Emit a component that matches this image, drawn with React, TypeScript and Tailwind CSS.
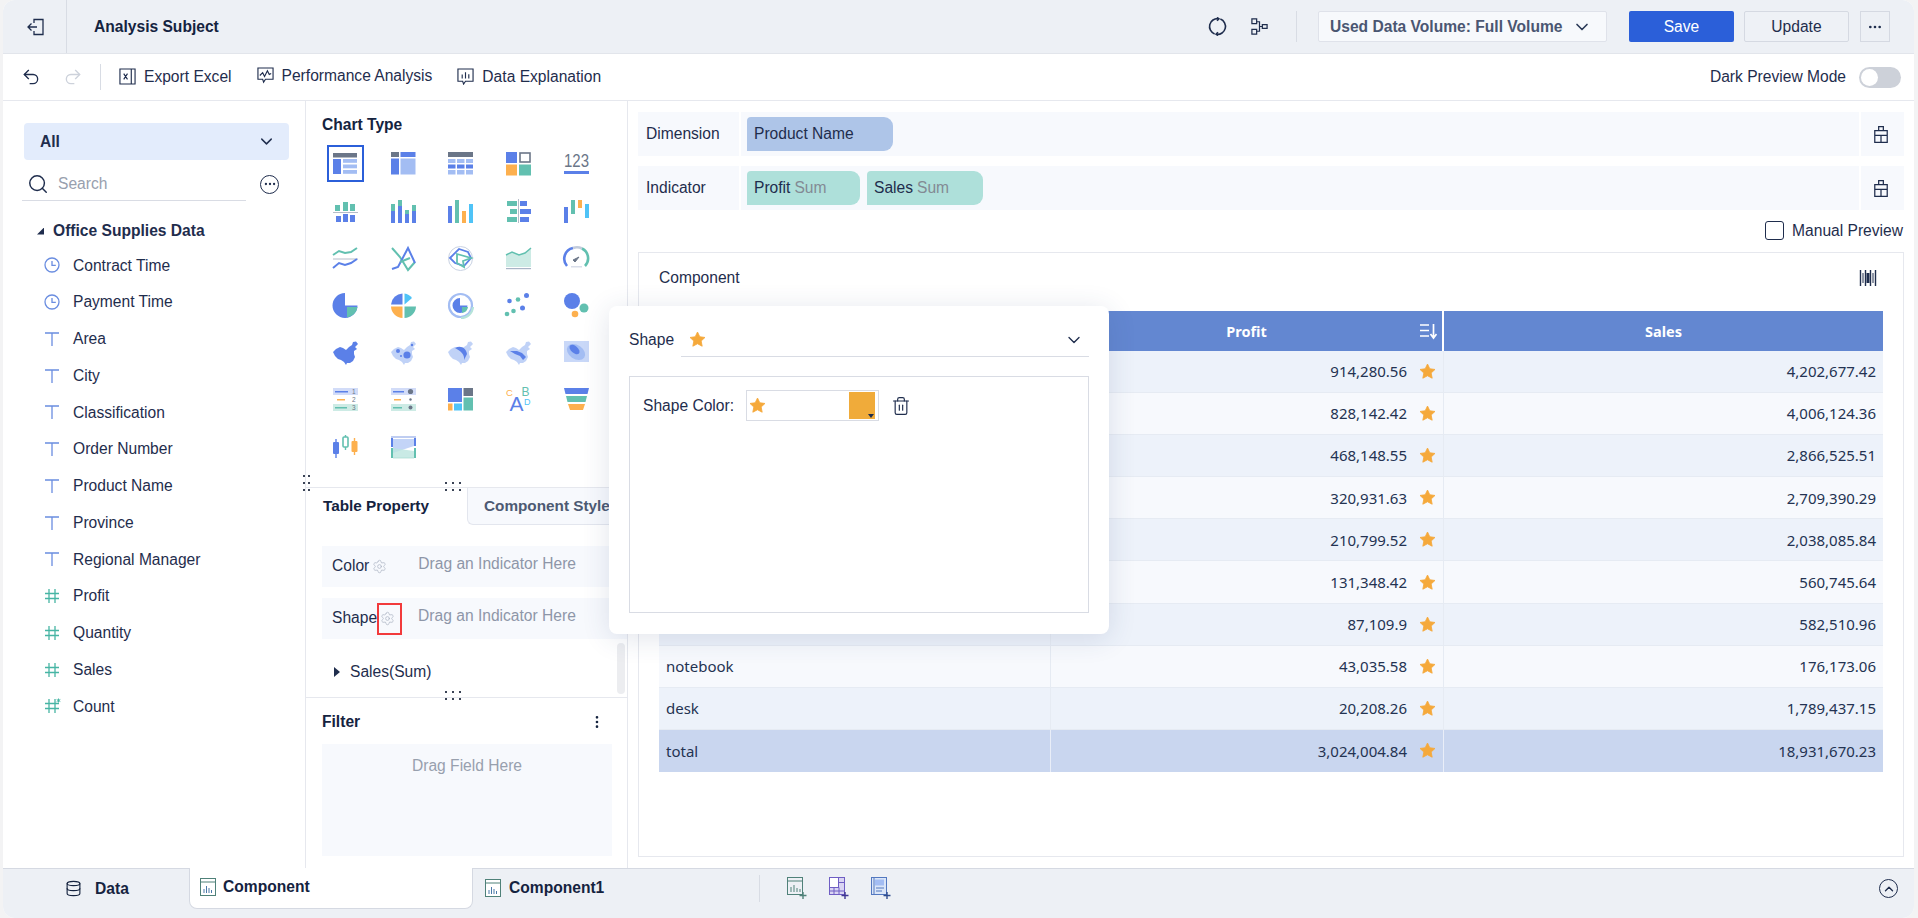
import { ChevronDown, Ellipsis, Search, Settings, Trash2, Undo2, Redo2, Database, EllipsisVertical, ChevronUp } from "lucide-react";

const B = "#5b80e8";
const L = "#a3bdf3";
const G = "#6b7688";
const T = "#62c0b0";
const O = "#fdb04e";
const C = "#4fc3f7";

type Box = [number, number, number, number, string];

const Bars = ({ items }: { items: Box[] }) => (
  <>
    {items.map(([x, y, w, h, c], i) => (
      <rect key={i} x={x} y={y} width={w} height={h} fill={c} />
    ))}
  </>
);

const Star = ({ className = "w-[17px] h-[17px]" }: { className?: string }) => (
  <svg viewBox="0 0 20 20" className={className}>
    <path
      d="M10 1.2l2.7 5.6 6.1.8-4.5 4.2 1.2 6.1L10 15l-5.5 2.9 1.2-6.1L1.2 7.6l6.1-.8z"
      fill="#f5a93b"
      stroke="#f5a93b"
      strokeWidth="1"
      strokeLinejoin="round"
    />
  </svg>
);

const chinaPath = "M0 12L3 9 7 7 10 8 13 10 16 7 19 5 20 2 23 1.500 25 4 22 7 24 9 21 11 21 14 22 17 20 21 17 23 14 23 13 25 11 22 8 20 5 19 2 16z";

const chartIcons: React.ReactNode[] = [
  <Bars items={[[0, 2, 24, 4.5, G], [0, 8, 8, 15, B], [10, 8, 14, 3.8, L], [10, 13.5, 14, 3.8, L], [10, 19, 14, 3.8, L]]} />,
  <Bars items={[[0, 1, 8, 5, G], [9.5, 1, 15, 5, B], [0, 7.5, 8, 16, B], [9.5, 7.5, 15, 16, L]]} />,
  <>
    <Bars items={[[0, 1, 25, 5, G]]} />
    <Bars items={[[0, 8, 7.5, 4, L], [9, 8, 7.5, 4, L], [18, 8, 7, 4, L], [0, 13.5, 7.5, 4, B], [9, 13.5, 7.5, 4, B], [18, 13.5, 7, 4, B], [0, 19, 7.5, 4.5, L], [9, 19, 7.5, 4.5, L], [18, 19, 7, 4.5, L]]} />
  </>,
  <>
    <Bars items={[[0, 1, 11, 11, B], [0, 13.5, 11, 11, O], [13, 13.5, 12, 11, T]]} />
    <rect x="14" y="2" width="10" height="9" fill="none" stroke={G} strokeWidth="1.6" />
  </>,
  <>
    <text x="12.5" y="16" textAnchor="middle" fontSize="18" textLength="25" lengthAdjust="spacingAndGlyphs" fill={G} fontFamily="Liberation Sans, sans-serif">123</text>
    <Bars items={[[0, 20, 25, 3, B]]} />
  </>,
  <Bars items={[[2, 6, 5, 6, T], [10, 3, 5, 9, T], [17, 5, 5, 7, T], [0, 13, 25, 1, "#b5bcc9"], [3, 17, 5, 6, B], [10, 15, 5, 8, B], [17, 16, 5, 7, B]]} />,
  <Bars items={[[0, 5, 4, 7, T], [0, 12, 4, 12, B], [7, 1, 4, 6, T], [7, 7, 4, 17, B], [14, 11, 4, 4, T], [14, 15, 4, 9, B], [21, 6, 4, 6, T], [21, 12, 4, 12, B]]} />,
  <Bars items={[[0, 7, 4, 17, B], [7, 1, 4, 23, T], [14, 12, 4, 12, O], [21, 5, 4, 19, C]]} />,
  <Bars items={[[1, 2, 10, 5, T], [4, 10, 7, 5, T], [1, 18, 10, 5, T], [12, 0, 1, 24, "#b5bcc9"], [14, 2, 7, 5, B], [14, 10, 11, 5, B], [14, 18, 9, 5, B]]} />,
  <Bars items={[[0, 8, 4, 16, B], [7, 1, 4, 14, T], [14, 1, 4, 8, O], [21, 5, 4, 14, C]]} />,
  <g fill="none" strokeWidth="2">
    <path d="M0 9l6-4 6 2 6-1 6-4" stroke={T} />
    <path d="M0 13h25" stroke="#b5bcc9" strokeWidth="1" />
    <path d="M0 22l6-5 6 2 6-2 6-4" stroke={B} />
  </g>,
  <g fill="none" strokeWidth="2">
    <path d="M1 2l8 9 8 13 7-8" stroke={T} />
    <path d="M1 23l6-2 10-19 7 15" stroke={B} />
    <path d="M9 16l10-4" stroke={T} />
  </g>,
  <g fill="none">
    <circle cx="12.5" cy="12.5" r="12" stroke="#c9d2e3" strokeWidth="1" />
    <path d="M2 12L11 3l9 3 3 6-7 8-9-3z" stroke={B} strokeWidth="1.8" />
    <path d="M9 8l14 4-8 3 1 6-7-4z" stroke={T} strokeWidth="1.8" />
  </g>,
  <>
    <path d="M0 9l6-3 7 3 6-2 6-5v19H0z" fill="#cdebe5" />
    <path d="M0 9l6-3 7 3 6-2 6-5" fill="none" stroke={T} strokeWidth="1.5" />
    <rect x="0" y="22" width="25" height="1.2" fill="#a9b4c6" />
  </>,
  <g fill="none" strokeWidth="2.6">
    <path d="M3 20A11 11 0 0 1 9 2" stroke={B} />
    <path d="M9 2A11 11 0 0 1 18 2.5" stroke="#c2cbdb" />
    <path d="M18 2.5A11 11 0 0 1 21 20" stroke={T} />
    <path d="M9 14l6-3-4 5z" fill={G} stroke={G} strokeWidth="1" />
    <rect x="7" y="20" width="11" height="1.5" fill="#d9deea" stroke="none" />
  </g>,
  <>
    <path d="M12 0a12.5 12.5 0 1 0 12.5 12.5H12z" fill={B} />
    <path d="M14 14h10.500A12 12 0 0 1 14 24.500z" fill={T} />
  </>,
  <>
    <path d="M11.500 0.500A12 12 0 0 0 0 11.500h11.500z" fill={B} />
    <path d="M13.500 0.500A12 12 0 0 1 21 5l-7.500 6.500z" fill={C} />
    <path d="M0 13.500h11.500V25A12 12 0 0 1 0 13.500z" fill={O} />
    <path d="M13.500 13.500H25A12 12 0 0 1 13.500 25z" fill={T} />
  </>,
  <>
    <circle cx="12.5" cy="12.5" r="11.5" fill="none" stroke={L} strokeWidth="2.2" />
    <path d="M12 5a7.500 7.500 0 1 0 7.500 7.500H12z" fill={B} />
    <path d="M14 14h6a7 7 0 0 1-6 6z" fill={T} />
    <path d="M13 25a12 12 0 0 0 12-11" fill="none" stroke="#b5e3da" strokeWidth="2.2" />
  </>,
  <g>
    <circle cx="20.5" cy="2.5" r="2.5" fill={B} />
    <circle cx="12" cy="6.5" r="2.3" fill={T} />
    <circle cx="3.5" cy="8" r="2.3" fill={B} />
    <circle cx="16.5" cy="15" r="2.5" fill={B} />
    <circle cx="7.5" cy="18" r="2.3" fill={T} />
    <circle cx="1" cy="21" r="2.3" fill={T} />
  </g>,
  <>
    <circle cx="8" cy="8" r="8" fill={B} />
    <circle cx="20" cy="15" r="4.5" fill={T} />
    <circle cx="11" cy="21" r="3.3" fill={O} />
  </>,
  <path d={chinaPath} fill={B} />,
  <>
    <path d={chinaPath} fill="#c0d2f7" />
    <circle cx="16" cy="15" r="3.6" fill={B} />
    <circle cx="7" cy="11" r="2" fill={B} />
    <circle cx="21" cy="5" r="1.2" fill={B} />
    <circle cx="10" cy="16" r="1" fill={B} />
  </>,
  <>
    <path d={chinaPath} fill="#c0d2f7" />
    <path d="M7 8c6-3 11 0 12 6l-3 6c1-5-3-9-9-12z" fill={B} />
  </>,
  <>
    <path d={chinaPath} fill="#c0d2f7" />
    <path d="M4 11l5 3 5 2 3 4 3-3-4-4-5-2z" fill={B} />
  </>,
  <>
    <rect width="25" height="21" y="1" fill="#c9d8f8" />
    <ellipse cx="12" cy="12" rx="10" ry="7" transform="rotate(35 12 12)" fill="#a3bdf3" />
    <ellipse cx="10.5" cy="9.5" rx="6" ry="3.5" transform="rotate(42 10.5 9.5)" fill={B} />
  </>,
  <>
    <Bars items={[[0, 1, 25, 7, "#d2dcf8"], [2, 4, 13, 1.5, B], [4, 12, 8, 1.5, O], [0, 17, 25, 7, "#cdebe5"], [2, 20, 12, 1.5, T]]} />
    <g fontSize="6.5" fill={G} fontFamily="Liberation Sans, sans-serif">
      <text x="19" y="7">1</text>
      <text x="19" y="15">2</text>
      <text x="19" y="23">3</text>
    </g>
  </>,
  <>
    <Bars items={[[0, 1, 25, 7, "#d2dcf8"], [2, 4, 11, 1.5, B], [3, 12, 7, 1.5, O], [0, 17, 25, 7, "#cdebe5"], [2, 20, 9, 1.5, T]]} />
    <circle cx="19.5" cy="4.5" r="2.6" fill={G} />
    <circle cx="19.5" cy="12.5" r="1.2" fill={G} />
    <circle cx="19.5" cy="20.5" r="2" fill={G} />
  </>,
  <Bars items={[[0, 1, 14, 14, B], [15.5, 1, 9.5, 8, G], [0, 16.5, 4.5, 7, O], [6, 16.5, 8, 7, C], [15.5, 10.5, 9.5, 13, T]]} />,
  <g fontFamily="Liberation Sans, sans-serif">
    <text x="3.500" y="24" fontSize="21" fill={B}>A</text>
    <text x="0" y="9" fontSize="9.5" fill={O}>C</text>
    <text x="15.500" y="9" fontSize="12" fill={T}>B</text>
    <text x="18" y="18" fontSize="9" fill={C}>D</text>
  </g>,
  <>
    <path d="M0 1h25l-1.500 6H1.500z" fill={B} />
    <path d="M2 9h21l-1.500 6h-18z" fill={T} />
    <path d="M4 17h17l-2 6h-13z" fill={O} />
  </>,
  <>
    <rect x="0" y="7" width="6" height="12" rx="1" fill={B} />
    <path d="M3 4v3M3 19v4" stroke={B} strokeWidth="1.4" />
    <rect x="10" y="2" width="5" height="10" rx="1" fill="none" stroke={T} strokeWidth="1.6" />
    <path d="M12.5 0v2M12.5 12v3" stroke={T} strokeWidth="1.4" />
    <rect x="18.5" y="6" width="6" height="11" rx="1" fill={O} />
    <path d="M21.5 3v3M21.5 17v3" stroke={O} strokeWidth="1.4" />
  </>,
  <>
    <Bars items={[[0, 1, 25, 2, "#bfcdf1"], [0, 3, 2, 9, B], [23, 3, 2, 8, B], [0, 13, 2, 10, T], [23, 13, 2, 10, T], [2, 22, 21, 1.5, "#bfe3dc"]]} />
    <path d="M2 4h21v7L2 18z" fill="#c3d4f7" />
    <path d="M2 13l21 3v7H2z" fill="#bce5de" fillOpacity=".8" />
  </>,
];

const ClockIcon = () => (
  <svg viewBox="0 0 16 16" className="w-[16px] h-[16px]" fill="none" stroke="#6a8de0" strokeWidth="1.3">
    <circle cx="8" cy="8" r="7" />
    <path d="M8 4v4.400h3.800" />
  </svg>
);

const TextIcon = () => (
  <svg viewBox="0 0 16 16" className="w-[16px] h-[16px]" fill="none" stroke="#6a8de0" strokeWidth="1.3">
    <path d="M1 2h14M8 2v13" />
  </svg>
);

const HashIcon = ({ star }: { star?: boolean }) => (
  <svg viewBox="0 0 18 16" className="w-[18px] h-[16px]" fill="none" stroke="#47b5a4" strokeWidth="1.3">
    <path d="M1 5.500h14M1 10.500h14M5 1v14M11 1v14" />
    {star && <path d="M14.500 0.500v4M12.700 1.500l3.600 2M16.300 1.500l-3.600 2" strokeWidth="1" />}
  </svg>
);

const fields: [string, "clock" | "text" | "hash" | "count"][] = [
  ["Contract Time", "clock"],
  ["Payment Time", "clock"],
  ["Area", "text"],
  ["City", "text"],
  ["Classification", "text"],
  ["Order Number", "text"],
  ["Product Name", "text"],
  ["Province", "text"],
  ["Regional Manager", "text"],
  ["Profit", "hash"],
  ["Quantity", "hash"],
  ["Sales", "hash"],
  ["Count", "count"],
];

const rows = [
  ["", "914,280.56", "4,202,677.42"],
  ["", "828,142.42", "4,006,124.36"],
  ["", "468,148.55", "2,866,525.51"],
  ["", "320,931.63", "2,709,390.29"],
  ["", "210,799.52", "2,038,085.84"],
  ["", "131,348.42", "560,745.64"],
  ["storage", "87,109.9", "582,510.96"],
  ["notebook", "43,035.58", "176,173.06"],
  ["desk", "20,208.26", "1,789,437.15"],
];

const Dots = ({ className, vertical }: { className: string; vertical?: boolean }) => (
  <div className={`absolute grid gap-x-[3px] gap-y-[5px] ${vertical ? "grid-cols-2" : "grid-cols-3 gap-x-[5px]"} ${className}`}>
    {Array.from({ length: 6 }).map((_, i) => (
      <span key={i} className="w-[2px] h-[2px] bg-[#3b4456]" />
    ))}
  </div>
);

const ToolbarItem = ({ icon, label, className }: { icon: React.ReactNode; label: string; className: string }) => (
  <div className={`flex items-center gap-[8px] ${className}`}>
    {icon}
    <span>{label}</span>
  </div>
);

const BuildIcon = () => (
  <svg viewBox="0 0 18 24" className="w-[14px] h-[19px]" fill="none" stroke="#1f2d4d" strokeWidth="1.6">
    <path d="M6 7V2h6v5M1 7h16v15H1zM1 13h16M9 13v9" />
  </svg>
);

const ChartTabIcon = () => (
  <svg viewBox="0 0 16 18" className="w-[16px] h-[18px]" fill="none" stroke="#4f8179" strokeWidth="1">
    <rect x="0.5" y="0.5" width="15" height="17" fill="#fff" />
    <path d="M0.500 4h15" />
    <path d="M4 15v-4M6.500 15V8M9 15v-5M11.500 15v-3" stroke="#4a78a8" />
  </svg>
);

const Divider = ({ className }: { className: string }) => <div className={`w-px bg-[#d8dce4] ${className}`} />;

const App = () => {
  return (
    <div className="relative w-[1918px] h-[918px] overflow-hidden bg-[#f3f3f4] pl-[3px] pr-[4px] font-['Liberation_Sans',Arial,sans-serif] text-[15.6px] text-[#1f2d4d]">
      <div className="flex flex-col h-full rounded-[12px] overflow-hidden bg-white">
        {/* top bar */}
        <header className="flex items-center h-[54px] shrink-0 bg-[#edf0f5] border-b border-[#e2e5eb]">
          <div className="flex items-center justify-center w-[64px] h-full border-r border-[#d8dce4]">
            <svg viewBox="0 0 18 18" className="w-[18px] h-[18px] ml-[2px]" fill="none" stroke="#1f2d4d" strokeWidth="1.3">
              <path d="M7 5V1.500h9v15H7V13M1 9h9M4.500 5.500L1 9l3.500 3.500" />
            </svg>
          </div>
          <span className="ml-[27px] font-bold text-[#15233f]">Analysis Subject</span>
          <div className="ml-auto flex items-center">
            <svg viewBox="0 0 20 20" className="w-[19px] h-[19px]" fill="none" stroke="#1f2d4d" strokeWidth="1.7">
              <path d="M11 1.800A8.300 8.300 0 0 0 7 17.800M9 18.200a8.300 8.300 0 0 0 4-16" />
              <path d="M9.500 0.500L11.500 2 9.500 4M10.500 16l-2 2 2 1.500" />
            </svg>
            <svg viewBox="0 0 20 20" className="w-[19px] h-[19px] ml-[23px]" fill="none" stroke="#1f2d4d" strokeWidth="1.3">
              <path d="M2 2h5v5H2zM2 13h5v5H2zM13 8h5v4h-5zM7 5h3v10H7M10 10h3" />
            </svg>
            <Divider className="h-[31px] ml-[27px]" />
            <div className="flex items-center justify-between w-[289px] h-[31px] ml-[21px] pl-[11px] pr-[14px] bg-[#f7f9fc] border border-[#dfe2ea] rounded-[2px] text-[#4a5672] font-bold">
              <span>Used Data Volume: Full Volume</span>
              <ChevronDown size={20} strokeWidth={2} className="text-[#2b3a58]" />
            </div>
            <button className="w-[105px] h-[31px] ml-[22px] bg-[#2b5fd9] text-white rounded-[2px]">Save</button>
            <button className="w-[105px] h-[31px] ml-[10px] bg-[#eef1f6] border border-[#d5d9e2] rounded-[2px]">Update</button>
            <button className="flex items-center justify-center w-[30px] h-[31px] ml-[11px] border border-[#d5d9e2]">
              <Ellipsis size={16} />
            </button>
            <div className="w-[24px]" />
          </div>
        </header>

        {/* toolbar */}
        <div className="flex items-center h-[47px] shrink-0 border-b border-[#e6e8ee]">
          <Undo2 size={20} strokeWidth={1.6} className="ml-[18px] text-[#1f2d4d]" />
          <Redo2 size={20} strokeWidth={1.6} className="ml-[22px] text-[#cdd2db]" />
          <Divider className="h-[26px] ml-[17px]" />
          <ToolbarItem
            className="ml-[18px]"
            label="Export Excel"
            icon={
              <svg viewBox="0 0 18 18" className="w-[17px] h-[17px]" fill="none" stroke="#1f2d4d" strokeWidth="1.2">
                <path d="M13 1h4v16h-4M13 1H1v16h12zM5 6l4 6M9 6l-4 6" />
              </svg>
            }
          />
          <ToolbarItem
            className="ml-[25px] pb-[2px]"
            label="Performance Analysis"
            icon={
              <svg viewBox="0 0 18 18" className="w-[17px] h-[17px]" fill="none" stroke="#1f2d4d" strokeWidth="1.2">
                <path d="M1 1h16v12H9l-2 3-1-3H1zM3 9l3-3 2 4 3-6 2 4 2-1" />
              </svg>
            }
          />
          <ToolbarItem
            className="ml-[25px]"
            label="Data Explanation"
            icon={
              <svg viewBox="0 0 18 18" className="w-[17px] h-[17px]" fill="none" stroke="#1f2d4d" strokeWidth="1.2">
                <path d="M1 1h16v13H9l-2 3-1-3H1zM5.500 7v4M9 4.500V11M12.500 6.500V11" />
              </svg>
            }
          />
          <span className="ml-auto">Dark Preview Mode</span>
          <div className="relative w-[42px] h-[21px] ml-[13px] mr-[13px] rounded-full bg-[#cdd1d9]">
            <span className="absolute left-[2px] top-[2px] w-[17px] h-[17px] rounded-full bg-white" />
          </div>
        </div>

        {/* body */}
        <div className="flex flex-1 min-h-0">
          {/* fields */}
          <aside className="w-[303px] shrink-0 border-r border-[#e6e8ee] pt-[22px] pl-[19px]">
            <div className="flex items-center justify-between w-[265px] h-[37px] ml-[2px] pl-[16px] pr-[13px] bg-[#e3ecfc] rounded-[4px] font-bold">
              <span>All</span>
              <ChevronDown size={19} strokeWidth={1.8} />
            </div>
            <div className="flex items-center mt-[7px]">
              <div className="flex items-center w-[224px] h-[34px] pl-[5px] border-b border-[#d9dce4]">
                <Search size={22} strokeWidth={1.6} className="text-[#1f2d4d]" />
                <span className="ml-[9px] text-[#98a0ae]">Search</span>
              </div>
              <div className="flex items-center justify-center w-[19px] h-[19px] ml-[14px] rounded-full border border-[#1f2d4d]">
                <Ellipsis size={14} />
              </div>
            </div>
            <div className="flex items-center h-[34px] mt-[13px] ml-[15px] font-bold">
              <span className="w-[7px] h-[7px] bg-[#1f2d4d] [clip-path:polygon(100%_0,100%_100%,0_100%)]" />
              <span className="ml-[9px]">Office Supplies Data</span>
            </div>
            <ul className="-mt-[1px]">
              {fields.map(([name, kind]) => (
                <li key={name} className="flex items-center h-[36.75px] pl-[22px]">
                  <span className="flex w-[29px]">
                    {kind === "clock" && <ClockIcon />}
                    {kind === "text" && <TextIcon />}
                    {kind === "hash" && <HashIcon />}
                    {kind === "count" && <HashIcon star />}
                  </span>
                  <span>{name}</span>
                </li>
              ))}
            </ul>
          </aside>

          {/* chart config */}
          <section className="relative flex flex-col w-[322px] shrink-0 border-r border-[#e6e8ee]">
            <Dots vertical className="left-[-3px] top-[374px]" />
            <div className="h-[386px] shrink-0 pt-[12px] pl-[16px]">
              <div className="font-bold text-[#15233f]">Chart Type</div>
              <div className="grid grid-cols-[repeat(5,57.7px)] auto-rows-[47.2px] mt-[4px] ml-[5px]">
                {chartIcons.map((ic, i) => (
                  <div key={i} className="flex items-center w-[37px] h-[47.2px]">
                    <div className={`flex items-center justify-center w-[37px] h-[37px] ${i === 0 ? "border-2 border-[#2b5fd9]" : ""}`}>
                      <svg viewBox="0 0 25 25" className="w-[25px] h-[25px] overflow-visible">{ic}</svg>
                    </div>
                  </div>
                ))}
              </div>
            </div>
            <div className="relative h-[210px] shrink-0 border-t border-[#e6e8ee]">
              <Dots className="left-[139px] -top-[6px]" />
              <div className="flex h-[37px] font-bold text-[15.3px]">
                <span className="flex items-center w-[161px] pl-[17px] text-[#15233f]">Table Property</span>
                <span className="flex items-center flex-1 pl-[16px] bg-[#f7f9fd] border-l border-b border-[#e3e6ee] rounded-bl-[6px] text-[#4d5a73] whitespace-nowrap">Component Style</span>
              </div>
              <div className="flex items-center h-[41px] mt-[21px] ml-[16px] bg-[#f7f9fd]">
                <span className="ml-[10px] -mt-[2px]">Color</span>
                <Settings size={15} strokeWidth={1.2} className="ml-[3px] text-[#aeb6c4]" />
                <span className="ml-[31px] -mt-[5px] text-[#8e96a8]">Drag an Indicator Here</span>
              </div>
              <div className="relative flex items-center h-[41px] mt-[11px] ml-[16px] bg-[#f7f9fd]">
                <span className="ml-[10px] -mt-[2px]">Shape</span>
                <Settings size={15} strokeWidth={1.2} className="ml-[3px] text-[#aeb6c4]" />
                <span className="ml-[23px] -mt-[5px] text-[#8e96a8]">Drag an Indicator Here</span>
                <div className="absolute left-[55px] top-[5px] w-[25px] h-[32px] border-[2.5px] border-[#f23a3c]" />
              </div>
              <div className="flex items-center h-[24px] mt-[21px] ml-[28px]">
                <span className="w-0 h-0 border-y-[5px] border-y-transparent border-l-[6px] border-l-[#1f2d4d]" />
                <span className="ml-[10px]">Sales(Sum)</span>
              </div>
              <div className="absolute right-[2px] top-[155px] w-[8px] h-[51px] rounded-full bg-[#ecedf0]" />
            </div>
            <div className="relative flex-1 border-t border-[#e6e8ee] pl-[16px]">
              <Dots className="left-[139px] -top-[7px]" />
              <div className="flex items-center justify-between h-[46px] pt-[2px] pr-[22px] font-bold text-[#15233f]">
                <span>Filter</span>
                <EllipsisVertical size={16} />
              </div>
              <div className="flex justify-center w-[290px] h-[112px] pt-[10px] bg-[#f7f9fd] text-[#98a0ae]">Drag Field Here</div>
            </div>
          </section>

          {/* preview */}
          <main className="flex flex-col flex-1 min-w-0 pt-[11px] px-[10px] pb-[11px]">
            <div className="flex h-[44px] shrink-0 bg-[#f7f9fd]">
              <span className="flex items-center w-[103px] pl-[8px] border-r-2 border-white">Dimension</span>
              <div className="flex flex-1 items-center pl-[6px]">
                <span className="flex items-center w-[146px] h-[34px] pl-[7px] bg-[#aec5e8] rounded-tl-[4px] rounded-r-[9px]">Product Name</span>
              </div>
              <span className="flex items-center justify-center w-[45px] pr-[3px] border-l-2 border-white"><BuildIcon /></span>
            </div>
            <div className="flex h-[44px] shrink-0 mt-[10px] bg-[#f7f9fd]">
              <span className="flex items-center w-[103px] pl-[8px] border-r-2 border-white">Indicator</span>
              <div className="flex flex-1 items-center gap-[7px] pl-[6px]">
                <span className="flex items-center w-[113px] h-[34px] pl-[7px] bg-[#aee0da] rounded-tl-[4px] rounded-r-[9px]">
                  Profit<span className="ml-[4px] text-[#838a94]">Sum</span>
                </span>
                <span className="flex items-center w-[116px] h-[34px] pl-[7px] bg-[#aee0da] rounded-tl-[4px] rounded-r-[9px]">
                  Sales<span className="ml-[4px] text-[#838a94]">Sum</span>
                </span>
              </div>
              <span className="flex items-center justify-center w-[45px] pr-[3px] border-l-2 border-white"><BuildIcon /></span>
            </div>
            <div className="flex items-center justify-end h-[42px] shrink-0 pb-[1px] pr-[1px]">
              <span className="w-[19px] h-[19px] rounded-[3px] border border-[#1f2d4d]" />
              <span className="ml-[8px]">Manual Preview</span>
            </div>
            <div className="flex-1 min-h-0 border border-[#e6e8ee] pl-[20px] pr-[20px]">
              <div className="flex items-center justify-between h-[58px] pb-[8px]">
                <span>Component</span>
                <svg viewBox="0 0 18 18" className="w-[18px] h-[18px] mr-[6px]" fill="none" stroke="#1f2d4d" strokeWidth="1.4">
                  <path d="M1.500 1v16M16.500 1v16M6.500 1v16M11.500 1v16" />
                  <path d="M9 4v10" strokeWidth="3" />
                  <path d="M4 4v10M14 4v10" strokeWidth="1" />
                </svg>
              </div>
              <div className="font-['Noto_Sans','Open_Sans',sans-serif] text-[15px] text-[#243352]">
                <div className="flex h-[40px] bg-[#6387d1] text-white font-bold text-[14.5px]">
                  <span className="w-[392px] border-r-2 border-white" />
                  <span className="relative flex items-center justify-center w-[393px] pt-[1px] border-r-2 border-white">
                    Profit
                    <svg viewBox="0 0 18 18" className="absolute right-[5px] top-[11px] w-[18px] h-[18px]" fill="none" stroke="#fff" strokeWidth="2">
                      <path d="M1 3h9M1 8.500h9M1 14h9M14.500 2v13M11.500 12l3 4 3-4" strokeWidth="1.7" />
                    </svg>
                  </span>
                  <span className="flex items-center justify-center flex-1 pt-[1px]">Sales</span>
                </div>
                {rows.map((r, i) => (
                  <div key={i} className={`flex h-[42.1px] border-b border-[#e6ebf3] ${i % 2 === 0 ? "bg-[#edf2fa]" : "bg-[#f7f9fd]"}`}>
                    <span className="flex items-center w-[392px] pl-[7px] border-r border-[#e6ebf3]">{r[0]}</span>
                    <span className="flex items-center justify-end w-[393px] pr-[7px] border-r border-[#e6ebf3]">
                      {r[1]}
                      <span className="ml-[12px]"><Star /></span>
                    </span>
                    <span className="flex items-center justify-end flex-1 pr-[7px]">{r[2]}</span>
                  </div>
                ))}
                <div className="flex h-[42.1px] bg-[#c9d6ef]">
                  <span className="flex items-center w-[392px] pl-[7px] border-r border-[#e9eef8]">total</span>
                  <span className="flex items-center justify-end w-[393px] pr-[7px] border-r border-[#e9eef8]">
                    3,024,004.84
                    <span className="ml-[12px]"><Star /></span>
                  </span>
                  <span className="flex items-center justify-end flex-1 pr-[7px]">18,931,670.23</span>
                </div>
              </div>
            </div>
          </main>
        </div>

        {/* bottom tabs */}
        <footer className="flex h-[50px] shrink-0 bg-[#edf0f5] border-t border-[#d5d9e2]">
          <div className="flex items-center w-[186px] pl-[62px] pb-[10px] font-bold text-[#15233f]">
            <Database size={17} strokeWidth={1.6} />
            <span className="ml-[13px]">Data</span>
          </div>
          <div className="flex items-center w-[284px] h-[41px] -mt-px bg-white rounded-b-[8px] border-x border-b border-[#d5d9e2] border-t-0 pl-[10px] pb-[2px] font-bold text-[#15233f]">
            <ChartTabIcon />
            <span className="ml-[7px]">Component</span>
          </div>
          <div className="flex items-center h-[40px] pl-[12px] pb-[2px] font-bold text-[#15233f]">
            <ChartTabIcon />
            <span className="ml-[8px]">Component1</span>
          </div>
          <div className="flex items-center h-[40px] ml-[155px] pb-[2px]">
            <Divider className="h-[27px]" />
            <svg viewBox="0 0 20 22" className="w-[20px] h-[22px] ml-[27px]" fill="none" stroke="#4f8179" strokeWidth="1">
              <rect x="0.5" y="0.5" width="15" height="17" />
              <path d="M0.500 4h15M4 15v-5M7 15V8M10 15v-4M13 15v-3" />
              <path d="M16 15v7M12.500 18.500h7" strokeWidth="1.4" />
            </svg>
            <svg viewBox="0 0 20 22" className="w-[20px] h-[22px] ml-[22px]" fill="#dad5f3" stroke="#6f5ec4" strokeWidth="1">
              <rect x="0.5" y="0.5" width="15" height="17" />
              <rect x="0.5" y="0.5" width="9" height="10" fill="#fff" />
              <path d="M9.500 5.500h6M0.500 14h15M5 10.500v7M10 10.500v7" />
              <path d="M16 15v7M12.500 18.500h7" strokeWidth="1.4" stroke="#3e3592" />
            </svg>
            <svg viewBox="0 0 20 22" className="w-[20px] h-[22px] ml-[22px]" fill="none" stroke="#5378c0" strokeWidth="1">
              <rect x="0.5" y="0.5" width="15" height="17" fill="#dbe6f8" />
              <rect x="4" y="2.5" width="9" height="6" fill="#a3bdf3" stroke="none" />
              <path d="M3 0.500v17M5 11h8M5 14h6" />
              <path d="M16 15v7M12.500 18.500h7" strokeWidth="1.4" stroke="#2f4c8f" />
            </svg>
          </div>
          <div className="flex items-center h-[40px] ml-auto mr-[16px] pb-[1px]">
            <span className="flex items-center justify-center w-[19px] h-[19px] rounded-full border-[1.5px] border-[#1f2d4d]">
              <ChevronUp size={14} strokeWidth={2.4} />
            </span>
          </div>
        </footer>
      </div>

      {/* shape popover */}
      <div className="absolute left-[609px] top-[306px] w-[500px] h-[328px] px-[20px] bg-white rounded-[8px] shadow-[0_4px_28px_rgba(45,65,110,0.14)]">
        <div className="flex items-center h-[51px]">
          <span className="w-[52px] shrink-0 pt-[17px]">Shape</span>
          <div className="flex items-center justify-between flex-1 h-[51px] pt-[17px] pl-[8px] pr-[5px] border-b border-[#d9dce4]">
            <Star />
            <ChevronDown size={20} strokeWidth={1.6} />
          </div>
        </div>
        <div className="h-[237px] mt-[19px] pt-[13px] pl-[13px] border border-[#d9dce4]">
          <div className="flex items-center">
            <span className="w-[103px]">Shape Color:</span>
            <div className="relative flex items-center justify-between w-[133px] h-[31px] pl-[2px] pr-[3px] border border-[#d9dce4]">
              <Star />
              <span className="relative w-[26px] h-[27px] bg-[#f0ab3a]">
                <span className="absolute right-[1px] bottom-[1px] w-0 h-0 border-x-[3px] border-x-transparent border-t-[4px] border-t-[#1f2d4d]" />
              </span>
            </div>
            <Trash2 size={20} strokeWidth={1.4} className="ml-[12px]" />
          </div>
        </div>
      </div>
    </div>
  );
};

export default App;
